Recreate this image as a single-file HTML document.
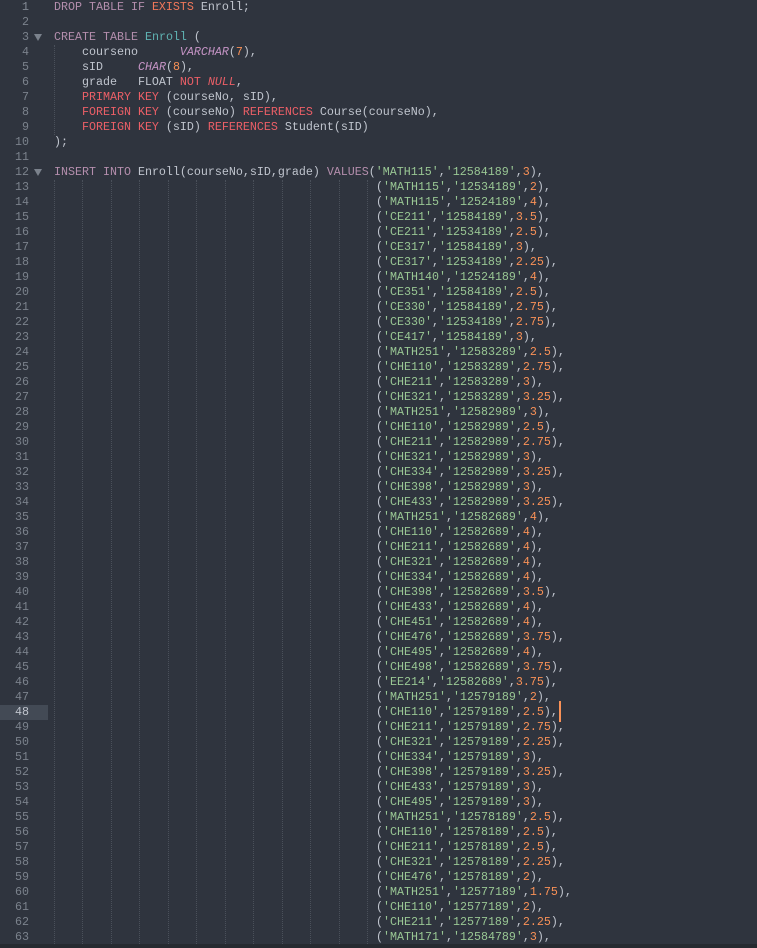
<!DOCTYPE html>
<html><head><meta charset="utf-8"><style>
html,body{margin:0;padding:0;background:#2f343e;width:757px;height:948px;overflow:hidden}
#ed{position:absolute;left:0;top:0;width:757px;height:944px;font-family:"Liberation Mono",monospace;font-size:11.67px;color:#c0c5ce}
.ln{position:absolute;left:0;width:29px;text-align:right;color:#7b828c}
.l{position:absolute;left:54px;white-space:pre;line-height:15px;height:15px}
.k{color:#b48ead}.r{color:#ec5f67}.o{color:#f0775a}.t{color:#5fb3b3}.i{color:#c594c5;font-style:italic}.ri{color:#ec5f67;font-style:italic}
.s{color:#99c794}.n{color:#f99157}
.g{position:absolute;width:0;border-left:1px dotted #4a505a}
.fold{position:absolute;left:34px;width:0;height:0;border-left:4.5px solid transparent;border-right:4.5px solid transparent;border-top:7px solid #7b828c}
#sb{position:absolute;left:0;top:944px;width:757px;height:4px;background:#262a30}
</style></head><body>
<div id="ed">
<div style="position:absolute;left:0;top:705px;width:48px;height:15px;background:#434a55"></div>
<div class="g" style="left:54px;top:45px;height:90px"></div>
<div class="g" style="left:54px;top:180px;height:764px"></div>
<div class="g" style="left:82px;top:180px;height:764px"></div>
<div class="g" style="left:111px;top:180px;height:764px"></div>
<div class="g" style="left:139px;top:180px;height:764px"></div>
<div class="g" style="left:168px;top:180px;height:764px"></div>
<div class="g" style="left:196px;top:180px;height:764px"></div>
<div class="g" style="left:225px;top:180px;height:764px"></div>
<div class="g" style="left:253px;top:180px;height:764px"></div>
<div class="g" style="left:282px;top:180px;height:764px"></div>
<div class="g" style="left:310px;top:180px;height:764px"></div>
<div class="g" style="left:339px;top:180px;height:764px"></div>
<div class="g" style="left:367px;top:180px;height:764px"></div>
<div class="fold" style="top:34px"></div>
<div class="fold" style="top:169px"></div>
<div style="position:absolute;left:559px;top:701px;width:2px;height:21px;background:#f99157"></div>
<div id="code"></div>
</div>
<div id="sb"></div>
<div style="position:absolute;left:0;top:0;font-family:'Liberation Mono',monospace;font-size:11.67px;color:#c0c5ce">
<div class="ln" style="top:0;line-height:15px">1</div>
</div>
<div style="position:absolute;left:0;top:0;width:757px;font-family:'Liberation Mono',monospace;font-size:11.67px;color:#c0c5ce">
<div class="l" style="top:0"><span class="k">DROP TABLE IF</span> <span class="o">EXISTS</span> Enroll;</div>
<div class="l" style="top:30px"><span class="k">CREATE TABLE</span> <span class="t">Enroll</span> (</div>
<div class="l" style="top:45px">    courseno      <span class="i">VARCHAR</span>(<span class="n">7</span>),</div>
<div class="l" style="top:60px">    sID     <span class="i">CHAR</span>(<span class="n">8</span>),</div>
<div class="l" style="top:75px">    grade   FLOAT <span class="r">NOT</span> <span class="ri">NULL</span>,</div>
<div class="l" style="top:90px">    <span class="r">PRIMARY KEY</span> (courseNo, sID),</div>
<div class="l" style="top:105px">    <span class="r">FOREIGN KEY</span> (courseNo) <span class="r">REFERENCES</span> Course(courseNo),</div>
<div class="l" style="top:120px">    <span class="r">FOREIGN KEY</span> (sID) <span class="r">REFERENCES</span> Student(sID)</div>
<div class="l" style="top:135px">);</div>
<div class="l" style="top:165px"><span class="k">INSERT INTO</span> Enroll(courseNo,sID,grade) <span class="k">VALUES</span>(<span class="s">'MATH115'</span>,<span class="s">'12584189'</span>,<span class="n">3</span>),</div>
<div class="l" style="top:180px;left:376px">(<span class="s">'MATH115'</span>,<span class="s">'12534189'</span>,<span class="n">2</span>),</div>
<div class="l" style="top:195px;left:376px">(<span class="s">'MATH115'</span>,<span class="s">'12524189'</span>,<span class="n">4</span>),</div>
<div class="l" style="top:210px;left:376px">(<span class="s">'CE211'</span>,<span class="s">'12584189'</span>,<span class="n">3.5</span>),</div>
<div class="l" style="top:225px;left:376px">(<span class="s">'CE211'</span>,<span class="s">'12534189'</span>,<span class="n">2.5</span>),</div>
<div class="l" style="top:240px;left:376px">(<span class="s">'CE317'</span>,<span class="s">'12584189'</span>,<span class="n">3</span>),</div>
<div class="l" style="top:255px;left:376px">(<span class="s">'CE317'</span>,<span class="s">'12534189'</span>,<span class="n">2.25</span>),</div>
<div class="l" style="top:270px;left:376px">(<span class="s">'MATH140'</span>,<span class="s">'12524189'</span>,<span class="n">4</span>),</div>
<div class="l" style="top:285px;left:376px">(<span class="s">'CE351'</span>,<span class="s">'12584189'</span>,<span class="n">2.5</span>),</div>
<div class="l" style="top:300px;left:376px">(<span class="s">'CE330'</span>,<span class="s">'12584189'</span>,<span class="n">2.75</span>),</div>
<div class="l" style="top:315px;left:376px">(<span class="s">'CE330'</span>,<span class="s">'12534189'</span>,<span class="n">2.75</span>),</div>
<div class="l" style="top:330px;left:376px">(<span class="s">'CE417'</span>,<span class="s">'12584189'</span>,<span class="n">3</span>),</div>
<div class="l" style="top:345px;left:376px">(<span class="s">'MATH251'</span>,<span class="s">'12583289'</span>,<span class="n">2.5</span>),</div>
<div class="l" style="top:360px;left:376px">(<span class="s">'CHE110'</span>,<span class="s">'12583289'</span>,<span class="n">2.75</span>),</div>
<div class="l" style="top:375px;left:376px">(<span class="s">'CHE211'</span>,<span class="s">'12583289'</span>,<span class="n">3</span>),</div>
<div class="l" style="top:390px;left:376px">(<span class="s">'CHE321'</span>,<span class="s">'12583289'</span>,<span class="n">3.25</span>),</div>
<div class="l" style="top:405px;left:376px">(<span class="s">'MATH251'</span>,<span class="s">'12582989'</span>,<span class="n">3</span>),</div>
<div class="l" style="top:420px;left:376px">(<span class="s">'CHE110'</span>,<span class="s">'12582989'</span>,<span class="n">2.5</span>),</div>
<div class="l" style="top:435px;left:376px">(<span class="s">'CHE211'</span>,<span class="s">'12582989'</span>,<span class="n">2.75</span>),</div>
<div class="l" style="top:450px;left:376px">(<span class="s">'CHE321'</span>,<span class="s">'12582989'</span>,<span class="n">3</span>),</div>
<div class="l" style="top:465px;left:376px">(<span class="s">'CHE334'</span>,<span class="s">'12582989'</span>,<span class="n">3.25</span>),</div>
<div class="l" style="top:480px;left:376px">(<span class="s">'CHE398'</span>,<span class="s">'12582989'</span>,<span class="n">3</span>),</div>
<div class="l" style="top:495px;left:376px">(<span class="s">'CHE433'</span>,<span class="s">'12582989'</span>,<span class="n">3.25</span>),</div>
<div class="l" style="top:510px;left:376px">(<span class="s">'MATH251'</span>,<span class="s">'12582689'</span>,<span class="n">4</span>),</div>
<div class="l" style="top:525px;left:376px">(<span class="s">'CHE110'</span>,<span class="s">'12582689'</span>,<span class="n">4</span>),</div>
<div class="l" style="top:540px;left:376px">(<span class="s">'CHE211'</span>,<span class="s">'12582689'</span>,<span class="n">4</span>),</div>
<div class="l" style="top:555px;left:376px">(<span class="s">'CHE321'</span>,<span class="s">'12582689'</span>,<span class="n">4</span>),</div>
<div class="l" style="top:570px;left:376px">(<span class="s">'CHE334'</span>,<span class="s">'12582689'</span>,<span class="n">4</span>),</div>
<div class="l" style="top:585px;left:376px">(<span class="s">'CHE398'</span>,<span class="s">'12582689'</span>,<span class="n">3.5</span>),</div>
<div class="l" style="top:600px;left:376px">(<span class="s">'CHE433'</span>,<span class="s">'12582689'</span>,<span class="n">4</span>),</div>
<div class="l" style="top:615px;left:376px">(<span class="s">'CHE451'</span>,<span class="s">'12582689'</span>,<span class="n">4</span>),</div>
<div class="l" style="top:630px;left:376px">(<span class="s">'CHE476'</span>,<span class="s">'12582689'</span>,<span class="n">3.75</span>),</div>
<div class="l" style="top:645px;left:376px">(<span class="s">'CHE495'</span>,<span class="s">'12582689'</span>,<span class="n">4</span>),</div>
<div class="l" style="top:660px;left:376px">(<span class="s">'CHE498'</span>,<span class="s">'12582689'</span>,<span class="n">3.75</span>),</div>
<div class="l" style="top:675px;left:376px">(<span class="s">'EE214'</span>,<span class="s">'12582689'</span>,<span class="n">3.75</span>),</div>
<div class="l" style="top:690px;left:376px">(<span class="s">'MATH251'</span>,<span class="s">'12579189'</span>,<span class="n">2</span>),</div>
<div class="l" style="top:705px;left:376px">(<span class="s">'CHE110'</span>,<span class="s">'12579189'</span>,<span class="n">2.5</span>),</div>
<div class="l" style="top:720px;left:376px">(<span class="s">'CHE211'</span>,<span class="s">'12579189'</span>,<span class="n">2.75</span>),</div>
<div class="l" style="top:735px;left:376px">(<span class="s">'CHE321'</span>,<span class="s">'12579189'</span>,<span class="n">2.25</span>),</div>
<div class="l" style="top:750px;left:376px">(<span class="s">'CHE334'</span>,<span class="s">'12579189'</span>,<span class="n">3</span>),</div>
<div class="l" style="top:765px;left:376px">(<span class="s">'CHE398'</span>,<span class="s">'12579189'</span>,<span class="n">3.25</span>),</div>
<div class="l" style="top:780px;left:376px">(<span class="s">'CHE433'</span>,<span class="s">'12579189'</span>,<span class="n">3</span>),</div>
<div class="l" style="top:795px;left:376px">(<span class="s">'CHE495'</span>,<span class="s">'12579189'</span>,<span class="n">3</span>),</div>
<div class="l" style="top:810px;left:376px">(<span class="s">'MATH251'</span>,<span class="s">'12578189'</span>,<span class="n">2.5</span>),</div>
<div class="l" style="top:825px;left:376px">(<span class="s">'CHE110'</span>,<span class="s">'12578189'</span>,<span class="n">2.5</span>),</div>
<div class="l" style="top:840px;left:376px">(<span class="s">'CHE211'</span>,<span class="s">'12578189'</span>,<span class="n">2.5</span>),</div>
<div class="l" style="top:855px;left:376px">(<span class="s">'CHE321'</span>,<span class="s">'12578189'</span>,<span class="n">2.25</span>),</div>
<div class="l" style="top:870px;left:376px">(<span class="s">'CHE476'</span>,<span class="s">'12578189'</span>,<span class="n">2</span>),</div>
<div class="l" style="top:885px;left:376px">(<span class="s">'MATH251'</span>,<span class="s">'12577189'</span>,<span class="n">1.75</span>),</div>
<div class="l" style="top:900px;left:376px">(<span class="s">'CHE110'</span>,<span class="s">'12577189'</span>,<span class="n">2</span>),</div>
<div class="l" style="top:915px;left:376px">(<span class="s">'CHE211'</span>,<span class="s">'12577189'</span>,<span class="n">2.25</span>),</div>
<div class="l" style="top:930px;left:376px">(<span class="s">'MATH171'</span>,<span class="s">'12584789'</span>,<span class="n">3</span>),</div>
</div>
<div style="position:absolute;left:0;top:0;width:29px;height:944px;overflow:hidden;font-family:'Liberation Mono',monospace;font-size:11.67px;line-height:15px;color:#7b828c;text-align:right;white-space:pre">1
2
3
4
5
6
7
8
9
10
11
12
13
14
15
16
17
18
19
20
21
22
23
24
25
26
27
28
29
30
31
32
33
34
35
36
37
38
39
40
41
42
43
44
45
46
47
<span style="color:#c0c5ce">48</span>
49
50
51
52
53
54
55
56
57
58
59
60
61
62
63</div>
<div style="position:absolute;left:0;top:944px;width:757px;height:4px;background:#262a30"></div>
</body></html>
